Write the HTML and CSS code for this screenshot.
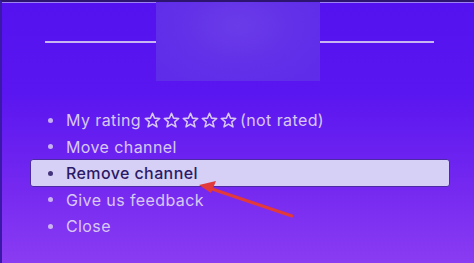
FILE: index.html
```html
<!DOCTYPE html>
<html>
<head>
<meta charset="utf-8">
<link rel="stylesheet" href="styles.css">
</head>
<body>
<div class="screen">
  <div class="header">
    <div class="rule rule-left"></div>
    <div class="poster"></div>
    <div class="rule rule-right"></div>
  </div>
  <ul class="menu">
    <li class="item"><span class="dot"></span><span class="label">My rating</span>
      <span class="stars">
        <svg class="star" viewBox="0 0 20 20"><polygon points="10,1.5 12.4,7.2 18.5,7.6 13.8,11.6 15.3,17.6 10,14.3 4.7,17.6 6.2,11.6 1.5,7.6 7.6,7.2"/></svg>
        <svg class="star" viewBox="0 0 20 20"><polygon points="10,1.5 12.4,7.2 18.5,7.6 13.8,11.6 15.3,17.6 10,14.3 4.7,17.6 6.2,11.6 1.5,7.6 7.6,7.2"/></svg>
        <svg class="star" viewBox="0 0 20 20"><polygon points="10,1.5 12.4,7.2 18.5,7.6 13.8,11.6 15.3,17.6 10,14.3 4.7,17.6 6.2,11.6 1.5,7.6 7.6,7.2"/></svg>
        <svg class="star" viewBox="0 0 20 20"><polygon points="10,1.5 12.4,7.2 18.5,7.6 13.8,11.6 15.3,17.6 10,14.3 4.7,17.6 6.2,11.6 1.5,7.6 7.6,7.2"/></svg>
        <svg class="star" viewBox="0 0 20 20"><polygon points="10,1.5 12.4,7.2 18.5,7.6 13.8,11.6 15.3,17.6 10,14.3 4.7,17.6 6.2,11.6 1.5,7.6 7.6,7.2"/></svg>
      </span><span class="label">(not rated)</span></li>
    <li class="item"><span class="dot"></span><span class="label">Move channel</span></li>
    <li class="item selected"><span class="dot"></span><span class="label">Remove channel</span></li>
    <li class="item"><span class="dot"></span><span class="label">Give us feedback</span></li>
    <li class="item"><span class="dot"></span><span class="label">Close</span></li>
  </ul>
  <svg class="arrow" width="474" height="263" viewBox="0 0 474 263">
    <line x1="292" y1="216" x2="212" y2="189" stroke="#e23a3a" stroke-width="3" stroke-linecap="round"/>
    <polygon points="199,185 216,181 211,193" fill="#e23a3a"/>
  </svg>
</div>
</body>
</html>
```
FILE: styles.css
```css
html, body {
  margin: 0;
  padding: 0;
}
body {
  width: 474px;
  height: 263px;
  overflow: hidden;
  font-family: Inter, "DejaVu Sans", sans-serif;
}
.screen {
  position: relative;
  width: 474px;
  height: 263px;
  box-sizing: border-box;
  border-top: 2px solid #2c1470;
  border-left: 2px solid #3a18a8;
  background: linear-gradient(180deg, #5312ef 0%, #5a16f0 35%, #7428f0 70%, #8a3cf2 100%);
  box-shadow: inset 0 1px 0 #9a80f0;
}
.header {
  display: flex;
  align-items: center;
  padding-left: 43px;
  height: 79px;
}
.rule {
  height: 2px;
  background: #c8b6f2;
}
.rule-left { width: 111px; }
.rule-right { width: 114px; }
.poster {
  width: 164px;
  height: 79px;
  background: radial-gradient(ellipse at 50% 30%, #6a3ce8 0%, #6230e8 50%, #5e2cea 100%);
}
.menu {
  list-style: none;
  margin: 0;
  padding: 26px 0 0 0;
}
.item {
  display: flex;
  align-items: center;
  height: 26.5px;
  margin-left: 28px;
  width: 420px;
  box-sizing: border-box;
  padding-left: 18px;
  color: #d8c8f4;
  font-size: 16px;
  letter-spacing: 0.4px;
}
.item.selected {
  height: 28px;
  margin-top: -0.75px;
  margin-bottom: -0.75px;
  background: #d6d0f6;
  border: 1px solid #4b2aa4;
  border-radius: 3px;
  color: #2b1a66;
  font-weight: 500;
  padding-left: 17px;
}
.dot {
  width: 5px;
  height: 5px;
  border-radius: 50%;
  background: currentColor;
  margin-right: 13px;
  opacity: 0.85;
}
.stars {
  display: flex;
  gap: 2px;
  margin: 0 3px 0 3px;
}
.star {
  width: 17px;
  height: 17px;
  fill: none;
  stroke: #d8c8f4;
  stroke-width: 1.8;
  stroke-linejoin: round;
}
.arrow {
  position: absolute;
  left: -2px;
  top: -2px;
}
```
